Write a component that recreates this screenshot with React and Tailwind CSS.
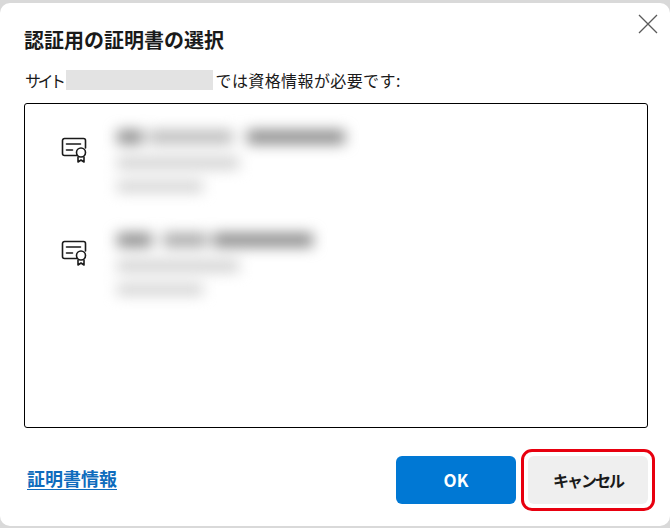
import React from 'react';

const FONT = { fontFamily: '"Noto Sans CJK JP", "Liberation Sans", sans-serif' };

const CertIcon = () => (
  <svg width="26" height="26" viewBox="0 0 26 26" fill="none" stroke="#1a1a1a" strokeWidth="1.6" className="shrink-0">
    <path d="M16 18.5H3.5a2 2 0 0 1-2-2V3.5a2 2 0 0 1 2-2h19a2 2 0 0 1 2 2V11" strokeLinecap="round" />
    <path d="M5.5 7h14M5.5 13h6" strokeLinecap="round" />
    <circle cx="20" cy="15.5" r="4.5" />
    <path d="M17 19.5V25l3-2 3 2v-5.5" strokeLinejoin="round" />
  </svg>
);

const certs = [
  { first: [[0, 26, '#8c8c8c'], [6, 84, '#bcbcbc'], [14, 98, '#8a8a8a']], second: 122, third: 86 },
  { first: [[0, 35, '#8c8c8c'], [11, 44, '#a8a8a8'], [6, 100, '#8a8a8a']], second: 122, third: 86 },
];

const BlurRow = ({ cert }) => (
  <div className="flex flex-col blur-[7px]">
    <div className="flex items-center h-[14px]">
      {cert.first.map(([gap, w, color], i) => (
        <div key={i} className="h-[14px]" style={{ marginLeft: gap, width: w, backgroundColor: color }} />
      ))}
    </div>
    <div className="mt-[13px] h-[12px] bg-[#d0d0d0]" style={{ width: cert.second }} />
    <div className="mt-[12px] h-[11px] bg-[#d0d0d0]" style={{ width: cert.third }} />
  </div>
);

export default function App() {
  return (
    <div className="w-[670px] h-[528px] bg-[#d9d9d9] pt-[3px] pb-[2px] overflow-hidden" style={FONT}>
      <div className="relative h-full bg-white rounded-[10px] pl-6 pr-[22px] pt-[22px] flex flex-col">
        <button className="absolute top-[11px] right-[12px] text-[#5a5a5a]">
          <svg width="20" height="20" viewBox="0 0 20 20" stroke="currentColor" strokeWidth="1.3" fill="none">
            <path d="M1 1l18 18M19 1L1 19" />
          </svg>
        </button>

        <h1 className="text-[20px] leading-[30px] font-bold text-[#1a1a1a]">認証用の証明書の選択</h1>

        <div className="mt-[13px] flex items-center h-[24px] text-[16px] text-[#1a1a1a]">
          <span className="ml-[1px] tracking-[-3.5px]">サイト</span>
          <div className="ml-[3px] w-[147px] h-[20px] bg-[#e3e3e3]" />
          <span className="ml-[3px] tracking-[0.4px]">では資格情報が必要です:</span>
        </div>

        <div className="mt-[11px] h-[325px] border-[1.5px] border-black rounded-[3px] pl-[36px] pt-[20px] flex flex-col gap-[27px]">
          {certs.map((cert, i) => (
            <div key={i} className="flex items-start h-[76px]">
              <div className="pt-[13px]">
                <CertIcon />
              </div>
              <div className="ml-[30px] pt-[6px]">
                <BlurRow cert={cert} />
              </div>
            </div>
          ))}
        </div>

        <div className="mt-[28px] flex items-center justify-between">
          <a className="ml-[3px] mb-[4px] text-[18px] font-semibold text-[#0f6cbd] underline underline-offset-[3px]">証明書情報</a>
          <div className="flex gap-3">
            <button className="w-[120px] h-[48px] rounded-[6px] bg-[#0078d4] text-white text-[17px] font-bold">OK</button>
            <div className="relative">
              <button className="w-[120px] h-[48px] rounded-[6px] bg-[#efefef] text-[#1a1a1a] text-[16px] font-semibold tracking-[-2px]">キャンセル</button>
              <div className="absolute -inset-[7px] border-[3px] border-[#e8000f] rounded-[11px]" />
            </div>
          </div>
        </div>
      </div>
    </div>
  );
}
